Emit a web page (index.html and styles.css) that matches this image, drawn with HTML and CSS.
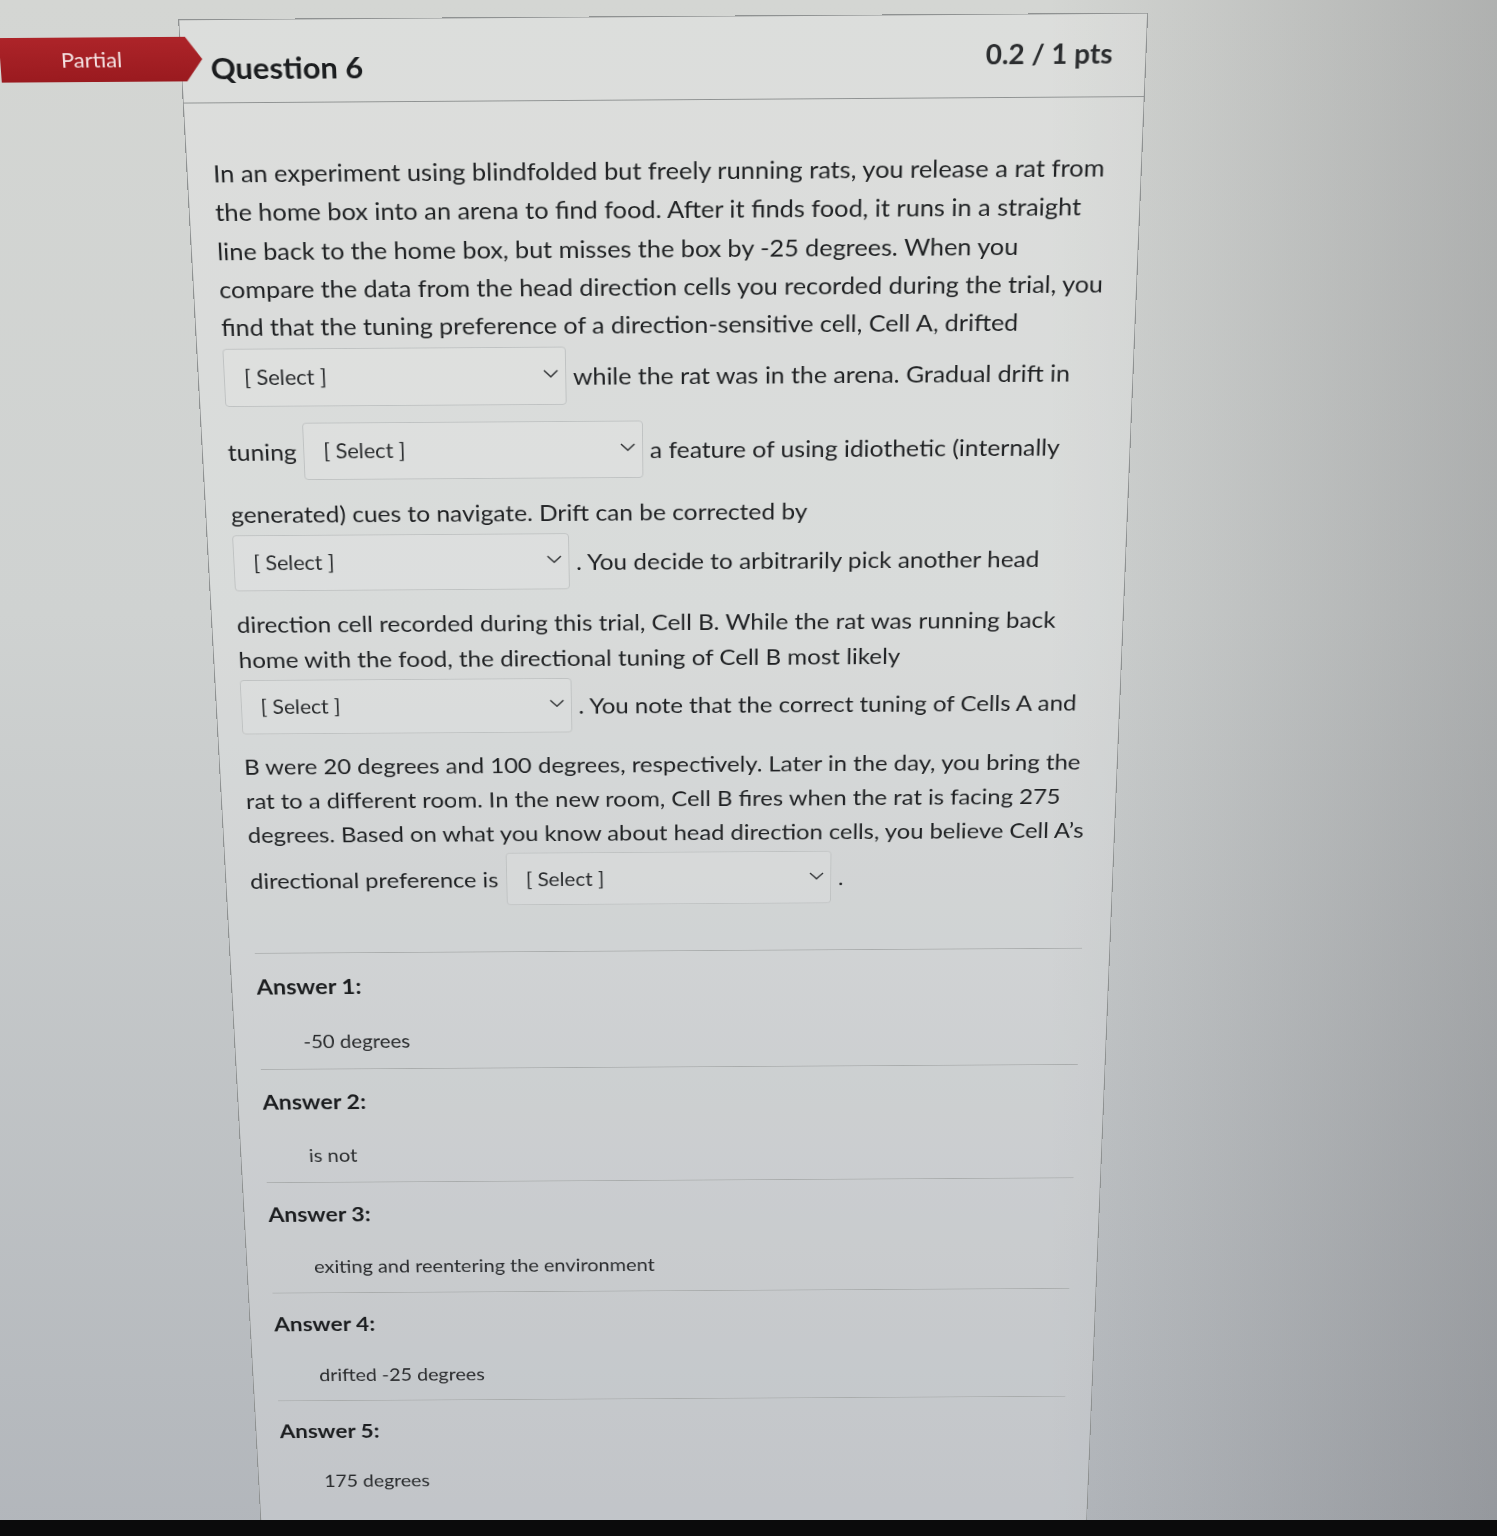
FILE: index.html
```html
<!DOCTYPE html>
<html lang="en">
<head>
<meta charset="utf-8">
<title>Question 6</title>
<link rel="stylesheet" href="styles.css">
</head>
<body>
<div class="screen">
  <div class="card">
    <div class="header">
      <div class="badge">Partial</div>
      <h2 class="qname">Question 6</h2>
      <div class="pts">0.2 / 1 pts</div>
    </div>
    <div class="qbody">
      <div class="qtext">
        <div class="line">In an experiment using blindfolded but freely running rats, you release a rat from</div>
        <div class="line">the home box into an arena to find food. After it finds food, it runs in a straight</div>
        <div class="line">line back to the home box, but misses the box by -25 degrees. When you</div>
        <div class="line">compare the data from the head direction cells you recorded during the trial, you</div>
        <div class="line">find that the tuning preference of a direction-sensitive cell, Cell A, drifted</div>
        <div class="selrow">
          <span class="sel"><span>[ Select ]</span><svg class="chev" width="16" height="9" viewBox="0 0 16 9"><polyline points="1,1 8,8 15,1" fill="none" stroke="#2a2c2e" stroke-width="1.5"/></svg></span>
          <span>while the rat was in the arena. Gradual drift in</span>
        </div>
        <div class="selrow">
          <span>tuning</span>
          <span class="sel after"><span>[ Select ]</span><svg class="chev" width="16" height="9" viewBox="0 0 16 9"><polyline points="1,1 8,8 15,1" fill="none" stroke="#2a2c2e" stroke-width="1.5"/></svg></span>
          <span>a feature of using idiothetic (internally</span>
        </div>
        <div class="line">generated) cues to navigate. Drift can be corrected by</div>
        <div class="selrow">
          <span class="sel"><span>[ Select ]</span><svg class="chev" width="16" height="9" viewBox="0 0 16 9"><polyline points="1,1 8,8 15,1" fill="none" stroke="#2a2c2e" stroke-width="1.5"/></svg></span>
          <span>. You decide to arbitrarily pick another head</span>
        </div>
        <div class="line">direction cell recorded during this trial, Cell B. While the rat was running back</div>
        <div class="line">home with the food, the directional tuning of Cell B most likely</div>
        <div class="selrow">
          <span class="sel"><span>[ Select ]</span><svg class="chev" width="16" height="9" viewBox="0 0 16 9"><polyline points="1,1 8,8 15,1" fill="none" stroke="#2a2c2e" stroke-width="1.5"/></svg></span>
          <span>. You note that the correct tuning of Cells A and</span>
        </div>
        <div class="line">B were 20 degrees and 100 degrees, respectively. Later in the day, you bring the</div>
        <div class="line">rat to a different room. In the new room, Cell B fires when the rat is facing 275</div>
        <div class="line">degrees. Based on what you know about head direction cells, you believe Cell A’s</div>
        <div class="selrow">
          <span>directional preference is</span>
          <span class="sel after wide"><span>[ Select ]</span><svg class="chev" width="16" height="9" viewBox="0 0 16 9"><polyline points="1,1 8,8 15,1" fill="none" stroke="#2a2c2e" stroke-width="1.5"/></svg></span>
          <span>.</span>
        </div>
      </div>
      <div class="answers">
        <div class="answer"><div class="alabel">Answer 1:</div><div class="aval">-50 degrees</div></div>
        <div class="answer"><div class="alabel">Answer 2:</div><div class="aval">is not</div></div>
        <div class="answer"><div class="alabel">Answer 3:</div><div class="aval">exiting and reentering the environment</div></div>
        <div class="answer"><div class="alabel">Answer 4:</div><div class="aval">drifted -25 degrees</div></div>
        <div class="answer"><div class="alabel">Answer 5:</div><div class="aval">175 degrees</div></div>
      </div>
    </div>
  </div>
  <div class="bezel"></div>
</div>
</body>
</html>
```

FILE: styles.css
```css
* { box-sizing: border-box; }
html, body { margin: 0; padding: 0; }
body {
  font-family: Lato, "Open Sans", "Liberation Sans", sans-serif;
  color: #1f2123;
  background: #b9bcbe;
}
.screen {
  position: relative;
  width: 1497px;
  height: 1536px;
  overflow: hidden;
  padding: 16px 0 0 178px;
  background:
    linear-gradient(to right, rgba(0,0,0,0) 0%, rgba(0,0,0,0) 70%, rgba(45,45,50,0.22) 100%),
    linear-gradient(to bottom, #d4d6d3 0%, #cfd2d1 40%, #b2b6bb 100%);
}
.card {
  width: 970px;
  border: 1px solid #8f9292;
  background: rgba(255,255,255,0.2);
  transform-origin: 50% 0;
  transform: perspective(2219px) rotateX(-12.3deg) rotateZ(-0.4deg);
}
.header {
  position: relative;
  height: 86px;
  border-bottom: 1px solid #8f9292;
  display: flex;
  justify-content: space-between;
  align-items: flex-start;
  padding: 0 33px 0 29px;
}
.badge {
  position: absolute;
  left: -182px;
  top: 17px;
  width: 203px;
  height: 46px;
  padding-left: 61px;
  line-height: 46px;
  font-size: 22px;
  color: #f4e2e2;
  background: linear-gradient(to bottom, #ad2429, #9a1a1f);
  clip-path: polygon(0 0, 92% 0, 100% 50%, 92% 100%, 0 100%);
}
.qname {
  margin: 31px 0 0;
  font-size: 31px;
  line-height: 36px;
  font-weight: 700;
  color: #1b1d1f;
}
.pts {
  margin-top: 23px;
  font-size: 28px;
  line-height: 34px;
  font-weight: 700;
  color: #2b2d2f;
}
.qbody {
  padding: 53px 24px 80px 26px;
}
.line {
  height: 41.3px;
  line-height: 41.3px;
  font-size: 25.8px;
  white-space: nowrap;
}
.selrow {
  height: 64px;
  margin: 2.5px 0 18px;
  display: flex;
  align-items: center;
  font-size: 25.8px;
  white-space: nowrap;
}
.selrow:last-child { margin-bottom: 0; }
.sel {
  flex: none;
  width: 355px;
  height: 64px;
  margin-right: 7px;
  padding: 0 7px 0 20px;
  display: flex;
  align-items: center;
  justify-content: space-between;
  border: 1px solid #bfc2c2;
  border-radius: 4px;
  background: rgba(255,255,255,0.1);
  font-size: 22.6px;
  color: #2a2c2e;
}
.sel.after { margin-left: 7px; }
.sel.wide { margin-left: 9px; }
.chev { flex: none; margin-top: -4px; }
.answers {
  margin: 57px 6px 0 1px;
}
.answer {
  border-top: 1px solid #a9acac;
  padding: 26px 0 21px;
}
.alabel {
  height: 30px;
  line-height: 30px;
  font-size: 26px;
  font-weight: 700;
  color: #1c1e20;
}
.aval {
  margin: 42px 0 0 49px;
  height: 26px;
  line-height: 26px;
  font-size: 22.7px;
  color: #2a2c2e;
}
.bezel {
  position: absolute;
  left: 0;
  right: 0;
  bottom: 0;
  height: 16px;
  background: #0b0b0c;
}
```
